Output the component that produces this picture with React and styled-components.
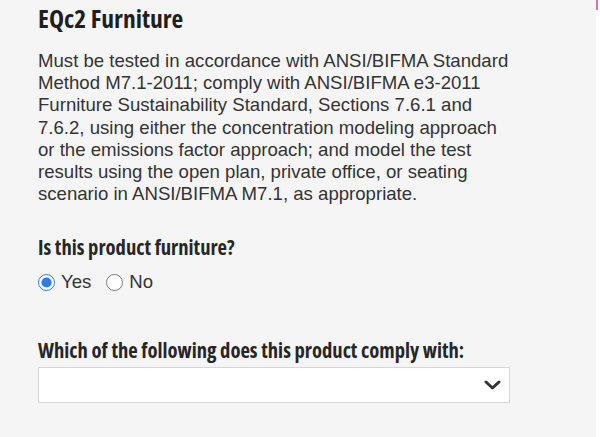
import React from "react";
import styled, { createGlobalStyle } from "styled-components";

const Global = createGlobalStyle`
  html, body { margin: 0; padding: 0; background: #ffffff; }
  body { width: 600px; height: 437px; overflow: hidden; }
`;

const Page = styled.div`
  position: relative;
  width: 596px;
  height: 437px;
  background: #f5f5f5;
  box-sizing: border-box;
  padding: 2px 0 0 38px;
`;

const Marker = styled.div`
  position: absolute;
  top: 0;
  right: -2px;
  width: 2px;
  height: 10px;
  background: #e36bb8;
`;

const Heading = styled.h2`
  margin: 0;
  font-family: "Open Sans", "Noto Sans", sans-serif;
  font-weight: 700;
  font-stretch: 87.5%;
  font-size: 25.5px;
  line-height: 32px;
  color: #1f1f1f;
`;

const Paragraph = styled.p`
  margin: 16px 0 0;
  font-family: "Liberation Sans", Arial, sans-serif;
  font-size: 18.6px;
  line-height: 22.2px;
  color: #333333;
`;

const Line = styled.span`
  display: block;
  white-space: nowrap;
`;

const Question = styled.div`
  margin-top: ${(p) => p.$gap}px;
  font-family: "Open Sans", "Noto Sans", sans-serif;
  font-weight: 700;
  font-stretch: 87.5%;
  font-size: 20.6px;
  line-height: 26px;
  color: #262626;
`;

const RadioRow = styled.div`
  display: flex;
  align-items: center;
  gap: 15px;
  margin-top: 12px;
`;

const RadioLabel = styled.label`
  display: flex;
  align-items: center;
  gap: 6px;
  font-family: "Liberation Sans", Arial, sans-serif;
  font-size: 18.6px;
  line-height: 20px;
  color: #333333;
`;

const RadioInput = styled.input`
  margin: 0;
  width: 17px;
  height: 17px;
  accent-color: #2f7de1;
`;

const Select = styled.div`
  margin-top: 4px;
  width: 472px;
  height: 36px;
  box-sizing: border-box;
  background: #ffffff;
  border: 1px solid #d6d6d6;
  display: flex;
  align-items: center;
  justify-content: flex-end;
  padding-right: 8px;
`;

const Chevron = () => (
  <svg width="17" height="10" viewBox="0 0 17 10">
    <path d="M2 2 L8.5 8 L15 2" fill="none" stroke="#333" strokeWidth="3" strokeLinecap="round" strokeLinejoin="round" />
  </svg>
);

const lines = [
  "Must be tested in accordance with ANSI/BIFMA Standard",
  "Method M7.1-2011; comply with ANSI/BIFMA e3-2011",
  "Furniture Sustainability Standard, Sections 7.6.1 and",
  "7.6.2, using either the concentration modeling approach",
  "or the emissions factor approach; and model the test",
  "results using the open plan, private office, or seating",
  "scenario in ANSI/BIFMA M7.1, as appropriate.",
];

export default function App() {
  return (
    <>
      <Global />
      <Page>
        <Marker />
        <Heading>EQc2 Furniture</Heading>
        <Paragraph>
          {lines.map((l) => (
            <Line key={l}>{l}</Line>
          ))}
        </Paragraph>
        <Question $gap={29}>Is this product furniture?</Question>
        <RadioRow>
          <RadioLabel>
            <RadioInput type="radio" name="furn" defaultChecked />
            Yes
          </RadioLabel>
          <RadioLabel>
            <RadioInput type="radio" name="furn" />
            No
          </RadioLabel>
        </RadioRow>
        <Question $gap={45}>Which of the following does this product comply with:</Question>
        <Select>
          <Chevron />
        </Select>
      </Page>
    </>
  );
}
